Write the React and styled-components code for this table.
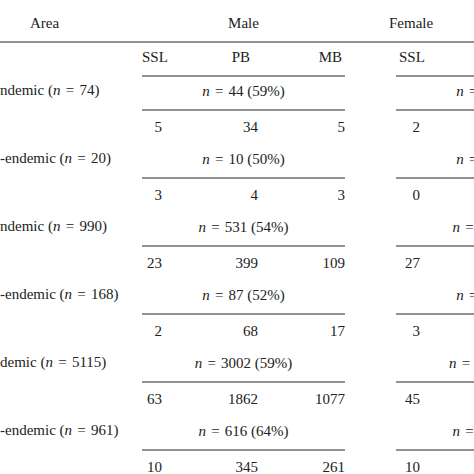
import React from "react";
import styled, { createGlobalStyle } from "styled-components";

const GlobalStyle = createGlobalStyle`
  html, body {
    margin: 0;
    padding: 0;
    background: #ffffff;
    overflow: hidden;
  }
  body {
    font-family: "Liberation Serif", "Times New Roman", serif;
    color: #222222;
  }
`;

const Frame = styled.div`
  width: 474px;
  height: 474px;
  overflow: hidden;
`;

const Table = styled.div`
  width: 599px;
  font-size: 15px;
  line-height: 15px;
`;

const Row = styled.div`
  display: grid;
  grid-template-columns: 142px 43px 73px 87px 51px 43px 73px 87px;
  height: ${(p) => p.$h}px;
  border-bottom: ${(p) => (p.$rule ? "2px solid #929292" : "none")};
`;

const Cell = styled.div`
  grid-column: ${(p) => p.$col || "auto"};
  text-align: ${(p) => p.$align || "left"};
  padding-top: ${(p) => p.$top || 0}px;
  padding-left: ${(p) => p.$pl || 0}px;
  padding-right: ${(p) => p.$pr || 0}px;
  border-bottom: ${(p) => (p.$rule ? "2px solid #929292" : "none")};
  white-space: nowrap;
  box-sizing: border-box;
`;

const Var = styled.i`
  font-style: italic;
`;

const Eq = styled.span`
  padding: 0 1.5px;
`;

const groups = [
  { label: "ndemic", n: 74, male: "44 (59%)", female: "30 (41%)", v: ["5", "34", "5", "2"] },
  { label: "-endemic", n: 20, male: "10 (50%)", female: "10 (50%)", v: ["3", "4", "3", "0"] },
  { label: "ndemic", n: 990, male: "531 (54%)", female: "459 (46%)", v: ["23", "399", "109", "27"] },
  { label: "-endemic", n: 168, male: "87 (52%)", female: "81 (48%)", v: ["2", "68", "17", "3"] },
  { label: "demic", n: 5115, male: "3002 (59%)", female: "2113 (41%)", v: ["63", "1862", "1077", "45"] },
  { label: "-endemic", n: 961, male: "616 (64%)", female: "345 (36%)", v: ["10", "345", "261", "10"] },
];

const Count = ({ value }) => (
  <>
    <Var>n</Var> <Eq>=</Eq> {value}
  </>
);

const Group = ({ g }) => (
  <>
    <Row $h={34}>
      <Cell $col="1" $top={6}>
        {g.label} (<Count value={g.n} />)
      </Cell>
      <Cell $col="2 / 5" $align="center" $top={7} $rule>
        <Count value={g.male} />
      </Cell>
      <Cell $col="6 / 9" $align="center" $top={7} $rule>
        <Count value={g.female} />
      </Cell>
    </Row>
    <Row $h={34}>
      <Cell $col="2" $align="right" $pr={23} $top={9}>
        {g.v[0]}
      </Cell>
      <Cell $col="3" $align="right" $top={9}>
        {g.v[1]}
      </Cell>
      <Cell $col="4" $align="right" $top={9}>
        {g.v[2]}
      </Cell>
      <Cell $col="6" $align="right" $pr={19} $top={9}>
        {g.v[3]}
      </Cell>
    </Row>
  </>
);

export default function App() {
  return (
    <Frame>
      <GlobalStyle />
      <Table>
        <Row $h={41} $rule>
          <Cell $col="1" $pl={30} $top={16}>
            Area
          </Cell>
          <Cell $col="2 / 5" $align="center" $top={16}>
            Male
          </Cell>
          <Cell $col="5 / 9" $pl={44} $top={16}>
            Female
          </Cell>
        </Row>
        <Row $h={34}>
          <Cell $col="2" $top={7} $rule>
            SSL
          </Cell>
          <Cell $col="3" $align="right" $pr={8} $top={7} $rule>
            PB
          </Cell>
          <Cell $col="4" $align="right" $pr={3} $top={7} $rule>
            MB
          </Cell>
          <Cell $col="6" $pl={3} $top={7} $rule>
            SSL
          </Cell>
          <Cell $col="7" $top={7} $rule />
          <Cell $col="8" $top={7} $rule />
        </Row>
        {groups.map((g, i) => (
          <Group key={i} g={g} />
        ))}
      </Table>
    </Frame>
  );
}
